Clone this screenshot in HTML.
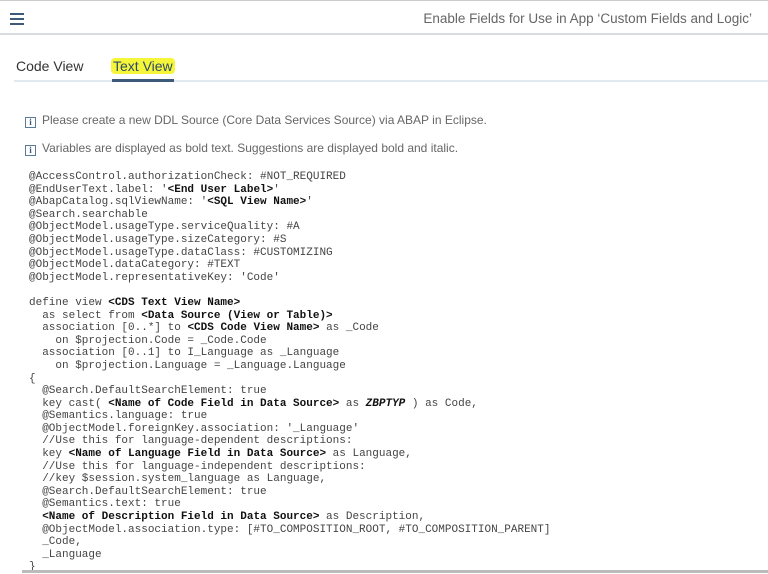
<!DOCTYPE html>
<html><head><meta charset="utf-8"><style>
*{margin:0;padding:0;box-sizing:border-box}
body{width:768px;height:573px;overflow:hidden;background:#fff;font-family:"Liberation Sans",sans-serif;position:relative}
.hdr{position:absolute;left:0;top:0;width:768px;height:35px;border-top:1px solid #ccc;border-bottom:2px solid #d9dde2;background:#fff}
.ham{position:absolute;left:10px;top:12px;width:14px}
.ham i{display:block;height:2px;background:#3d5a7a;margin-bottom:3px}
.title{position:absolute;right:16px;top:10px;font-size:13.5px;color:#666;white-space:nowrap}
.tab{position:absolute;top:58px;font-size:14px;color:#333}
.tabline{position:absolute;left:14px;top:80px;width:754px;height:2px;background:#e3e9f0}
.sel{position:absolute;left:112px;top:79px;width:62px;height:3px;background:#3d5a7a}
.hl{background:#f5f53a;color:#2d4a6a;padding:0 2px;border-radius:4px}
.info{position:absolute;left:25px;font-size:12px;color:#666;white-space:nowrap}
.info b{display:inline-block;width:11px;height:11px;border:1px solid #5a7a9a;color:#3d5a7a;font-size:9px;line-height:9px;text-align:center;font-family:"Liberation Serif",serif;margin-right:6px;vertical-align:-1px}
pre{position:absolute;left:29px;top:171px;font-family:"Liberation Mono",monospace;font-size:11px;line-height:12.6px;color:#444}
pre b{color:#111}
.bar{position:absolute;left:22px;top:570px;width:746px;height:3px;background:#bbb}
</style></head><body>
<div class="hdr"><div class="ham"><i></i><i></i><i></i></div><div class="title">Enable Fields for Use in App ‘Custom Fields and Logic’</div></div>
<div class="tab" style="left:16px">Code View</div>
<div class="tab" style="left:111px"><span class="hl">Text View</span></div>
<div class="tabline"></div><div class="sel"></div>
<div class="info" style="top:113px"><b>i</b>Please create a new DDL Source (Core Data Services Source) via ABAP in Eclipse.</div>
<div class="info" style="top:141px"><b>i</b>Variables are displayed as bold text. Suggestions are displayed bold and italic.</div>
<pre>@AccessControl.authorizationCheck: #NOT_REQUIRED
@EndUserText.label: '<b>&lt;End User Label&gt;</b>'
@AbapCatalog.sqlViewName: '<b>&lt;SQL View Name&gt;</b>'
@Search.searchable
@ObjectModel.usageType.serviceQuality: #A
@ObjectModel.usageType.sizeCategory: #S
@ObjectModel.usageType.dataClass: #CUSTOMIZING
@ObjectModel.dataCategory: #TEXT
@ObjectModel.representativeKey: 'Code'

define view <b>&lt;CDS Text View Name&gt;</b>
  as select from <b>&lt;Data Source (View or Table)&gt;</b>
  association [0..*] to <b>&lt;CDS Code View Name&gt;</b> as _Code
    on $projection.Code = _Code.Code
  association [0..1] to I_Language as _Language
    on $projection.Language = _Language.Language
{
  @Search.DefaultSearchElement: true
  key cast( <b>&lt;Name of Code Field in Data Source&gt;</b> as <b><i>ZBPTYP</i></b> ) as Code,
  @Semantics.language: true
  @ObjectModel.foreignKey.association: '_Language'
  //Use this for language-dependent descriptions:
  key <b>&lt;Name of Language Field in Data Source&gt;</b> as Language,
  //Use this for language-independent descriptions:
  //key $session.system_language as Language,
  @Search.DefaultSearchElement: true
  @Semantics.text: true
  <b>&lt;Name of Description Field in Data Source&gt;</b> as Description,
  @ObjectModel.association.type: [#TO_COMPOSITION_ROOT, #TO_COMPOSITION_PARENT]
  _Code,
  _Language
}</pre>
<div class="bar"></div>
</body></html>
